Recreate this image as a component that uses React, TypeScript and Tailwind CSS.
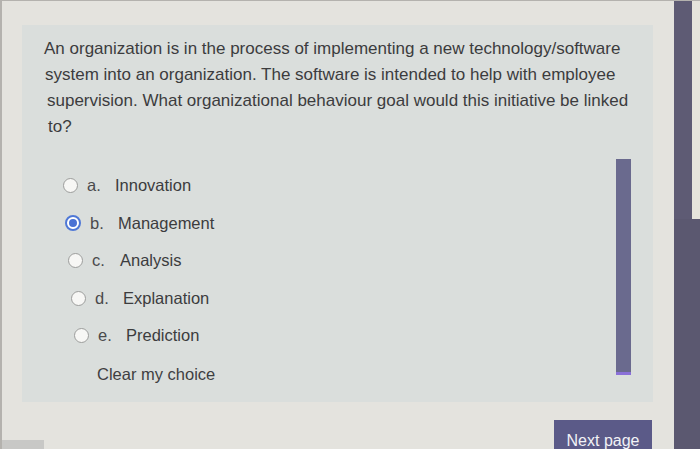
import React from "react"

const lines = [
  { text: "An organization is in the process of implementing a new technology/software", pad: "pl-0" },
  { text: "system into an organization. The software is intended to help with employee", pad: "pl-[1px]" },
  { text: "supervision. What organizational behaviour goal would this initiative be linked", pad: "pl-[3px]" },
  { text: "to?", pad: "pl-[4px]" },
]

const options = [
  { key: "a.", label: "Innovation", shift: "ml-0" },
  { key: "b.", label: "Management", shift: "ml-[2px]", checked: true },
  { key: "c.", label: "Analysis", shift: "ml-[5px]" },
  { key: "d.", label: "Explanation", shift: "ml-[8px]" },
  { key: "e.", label: "Prediction", shift: "ml-[11px]" },
]

function Radio({ checked }: { checked?: boolean }) {
  if (checked) {
    return (
      <span className="flex h-[16px] w-[16px] items-center justify-center rounded-full border-[2px] border-[#4f78d6] bg-white">
        <span className="h-[8px] w-[8px] rounded-full bg-[#4a72d4]" />
      </span>
    )
  }
  return <span className="h-[15px] w-[15px] rounded-full border border-[#9c9d9c] bg-[#f7f7f5]" />
}

export default function App() {
  return (
    <div
      className="relative flex h-[449px] w-[700px] overflow-hidden border-t border-l-[2px] border-[#b4b2ae] bg-[#e4e3de] text-[#3c3c3e]"
      style={{ fontFamily: '"Liberation Sans", Arial, sans-serif' }}
    >
      <div className="flex flex-1 flex-col pt-[24px] pl-[20px] pr-[21px]">
        {/* question card */}
        <div className="flex h-[377px] shrink-0 flex-col bg-[#dadedc] pt-[11px] pl-[22px] pr-[10px]">
          <div className="text-[17px] leading-[26px]">
            {lines.map((l) => (
              <div key={l.text} className={l.pad}>
                {l.text}
              </div>
            ))}
          </div>

          <div className="mt-[18px] flex">
            <div className="flex flex-1 flex-col pt-[9px] pl-[19px] text-[16.5px]">
              {options.map((o) => (
                <div key={o.key} className={`flex h-[37.5px] items-center ${o.shift}`}>
                  <Radio checked={o.checked} />
                  <span className="ml-[9px] w-[28px] text-[#4a4a4c]">{o.key}</span>
                  <span>{o.label}</span>
                </div>
              ))}
              <div className="ml-[34px] flex h-[40px] items-center text-[#3f3f42]">Clear my choice</div>
            </div>
            <div className="mt-[1px] mr-[12px] flex h-[216px] w-[15px] flex-col bg-[#6a6a8e]">
              <div className="flex-1" />
              <div className="h-[3px] bg-[#8a70d8]" />
            </div>
          </div>
        </div>

        <div className="mt-[18px] flex shrink-0 justify-end pr-[1px]">
          <div className="flex h-[34px] w-[98px] items-start justify-center bg-[#5b5a88] pt-[11px] text-[16px] leading-[20px] text-[#f2f2f6]">
            Next page
          </div>
        </div>
      </div>

      <div className="flex w-[26px] flex-col">
        <div className="flex h-[218px]">
          <div className="w-[18px] bg-[#5e5b74]" />
          <div className="flex-1 bg-[#e6e4dc]" />
        </div>
        <div className="flex-1 bg-[#5b5870]" />
      </div>

      <div className="absolute bottom-0 left-0 h-[9px] w-[42px] bg-[#c8c8c6]" />
    </div>
  )
}
